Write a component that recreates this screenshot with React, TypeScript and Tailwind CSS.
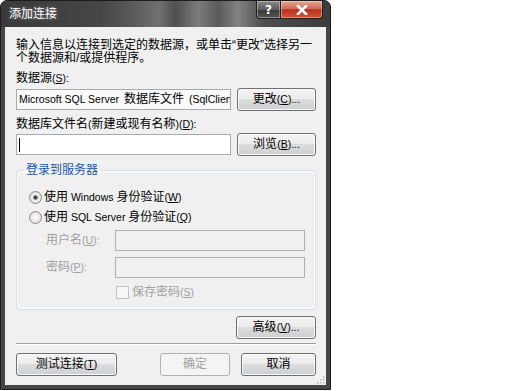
import React from "react";

const CJK = /[\u3000-\u9fff\uff00-\uffef]/;

// "&X" marks the underlined access key
function Mnemonic({ s }: { s: string }) {
  const parts = s.split(/&(.)/);
  return (
    <>
      {parts.map((p, i) =>
        i % 2 === 1 ? (
          <span key={i} className="underline underline-offset-[1px]">
            {p}
          </span>
        ) : (
          <React.Fragment key={i}>{p}</React.Fragment>
        )
      )}
    </>
  );
}

// latin runs are set smaller, like Tahoma 8pt next to 9pt CJK
function Txt({ s }: { s: string }) {
  const parts = s.split(/([\u3000-\u9fff\uff00-\uffef]+)/).filter(Boolean);
  return (
    <span>
      {parts.map((p, i) =>
        CJK.test(p) ? (
          <span key={i}>{p}</span>
        ) : (
          <span key={i} className="text-[10.5px]">
            <Mnemonic s={p} />
          </span>
        )
      )}
    </span>
  );
}

function Btn({
  label,
  className,
  disabled,
}: {
  label: string;
  className: string;
  disabled?: boolean;
}) {
  if (disabled) {
    return (
      <div
        className={`h-[23px] rounded-[3px] border border-[#adb2b5] bg-[#f4f4f4] text-[#a0a0a0] flex items-center justify-center leading-[13px] ${className}`}
      >
        <Txt s={label} />
      </div>
    );
  }
  return (
    <div
      className={`h-[23px] rounded-[3px] border border-[#707070] bg-[linear-gradient(to_bottom,#f4f4f4_0%,#ececec_45%,#dcdcdc_50%,#cdcfd1_100%)] shadow-[inset_0_0_0_1px_#fbfbfb] flex items-center justify-center leading-[13px] text-black ${className}`}
    >
      <Txt s={label} />
    </div>
  );
}

function Radio({ checked }: { checked?: boolean }) {
  return (
    <svg width="13" height="13" viewBox="0 0 13 13" className="shrink-0">
      <defs>
        <radialGradient id={checked ? "rg1" : "rg2"} cx="0.5" cy="0.5" r="0.6">
          <stop offset="0" stopColor="#ffffff" />
          <stop offset="1" stopColor="#d8d8d8" />
        </radialGradient>
      </defs>
      <circle cx="6.5" cy="6.5" r="6" fill={`url(#${checked ? "rg1" : "rg2"})`} stroke="#8a8a8a" />
      {checked && <circle cx="6.5" cy="6.5" r="2.2" fill="#4a4a4a" />}
    </svg>
  );
}

export default function App() {
  return (
    <div className="w-[512px] h-[391px] bg-white font-['Liberation_Sans','Noto_Sans_CJK_SC',sans-serif] text-[12px] text-black">
      <div className="w-[331px] h-[390px] flex flex-col border border-[#1c1c1c] rounded-t-[7px] bg-[#454545] overflow-hidden">
        {/* title bar */}
        <div className="h-[26px] shrink-0 flex items-start bg-[linear-gradient(90deg,#3a3a3a_0%,#464646_30%,#5a5a5a_40%,#707070_48%,#4f4f4f_53%,#7c7c7c_60%,#5a5a5a_66%,#828282_72%,#4c4c4c_80%,#3c3c3c_100%)]">
          <div className="pl-[8px] pt-[6px] text-white leading-[14px] [text-shadow:0_0_4px_rgba(255,255,255,0.35)]">
            添加连接
          </div>
          <div className="ml-auto mr-[7px] flex">
            <div className="w-[25px] h-[18px] border border-[#202020] border-t-0 rounded-bl-[4px] bg-[linear-gradient(to_bottom,#8a8a8a_0%,#5c5c5c_50%,#3a3a3a_52%,#555555_100%)] shadow-[inset_0_0_0_1px_rgba(255,255,255,0.35)] flex items-center justify-center text-white font-bold text-[12px] leading-none font-['DejaVu_Sans',sans-serif]">
              ?
            </div>
            <div className="w-[42px] h-[18px] border border-[#202020] border-t-0 border-l-0 rounded-br-[4px] bg-[linear-gradient(to_bottom,#e8a898_0%,#d06a55_45%,#b8301c_52%,#d0553a_100%)] shadow-[inset_0_0_0_1px_rgba(255,255,255,0.35)] flex items-center justify-center">
              <svg width="12" height="10" viewBox="0 0 12 10">
                <path d="M2 1 L10 9 M10 1 L2 9" stroke="#ffffff" strokeWidth="2.6" strokeLinecap="square" />
              </svg>
            </div>
          </div>
        </div>

        {/* client area */}
        <div className="relative flex-1 mx-[4px] mb-[4px] bg-[#f0f0f0] pl-[11px] pr-[10px] pt-[12px] flex flex-col">
          <p className="leading-[13px]">
            输入信息以连接到选定的数据源，或单击“更改”选择另一
            <br />
            个数据源和/或提供程序。
          </p>

          <div className="mt-[7px] leading-[13px]">
            <Txt s="数据源(&S):" />
          </div>
          <div className="mt-[3px] flex items-start">
            <div className="mt-[1px] w-[215px] h-[21px] border border-[#a7abb0] bg-[#f9f9f9] pl-[2px] flex items-center overflow-hidden whitespace-nowrap leading-[13px]">
              <span className="text-[10.5px]">Microsoft SQL Server</span>
              <span className="ml-[5px] shrink-0">数据库文件</span>
              <span className="ml-[5px] text-[10.5px] shrink-0">(SqlClient)</span>
            </div>
            <Btn label="更改(&C)..." className="ml-[6px] w-[79px]" />
          </div>

          <div className="mt-[7px] leading-[13px]">
            <Txt s="数据库文件名(新建或现有名称)(&D):" />
          </div>
          <div className="mt-[2px] flex items-start">
            <div className="mt-[1px] w-[215px] h-[21px] border border-[#a7abb0] bg-white flex items-center">
              <div className="ml-[2px] w-[1px] h-[14px] bg-black" />
            </div>
            <Btn label="浏览(&B)..." className="ml-[6px] w-[79px]" />
          </div>

          <fieldset className="mt-[8px] w-[300px] border border-[#d5dfe5] rounded-[3px] shadow-[inset_0_0_0_1px_#ffffff] pb-[10px]">
            <legend className="ml-[7px] px-[2px] leading-[13px] text-[#2257a8]">登录到服务器</legend>
            <div className="mt-[13px] ml-[12px] flex items-center gap-[2px] leading-[15px]">
              <Radio checked />
              <Txt s="使用 Windows 身份验证(&W)" />
            </div>
            <div className="mt-[5px] ml-[12px] flex items-center gap-[2px] leading-[15px]">
              <Radio />
              <Txt s="使用 SQL Server 身份验证(&Q)" />
            </div>
            <div className="mt-[5px] flex items-center">
              <div className="ml-[29px] w-[69px] text-[#a0a0a0] leading-[13px]">
                <Txt s="用户名(&U):" />
              </div>
              <div className="w-[190px] h-[21px] border border-[#b0b0b0] bg-[#f0f0f0]" />
            </div>
            <div className="mt-[6px] flex items-center">
              <div className="ml-[29px] w-[69px] text-[#a0a0a0] leading-[13px]">
                <Txt s="密码(&P):" />
              </div>
              <div className="w-[190px] h-[21px] border border-[#b0b0b0] bg-[#f0f0f0]" />
            </div>
            <div className="mt-[7px] ml-[99px] flex items-center gap-[3px] leading-[14px] text-[#a0a0a0]">
              <div className="w-[13px] h-[13px] border border-[#c2c2c2] bg-[#f6f6f6]" />
              <Txt s="保存密码(&S)" />
            </div>
          </fieldset>

          <div className="mt-[6px] flex justify-end">
            <Btn label="高级(&V)..." className="w-[80px]" />
          </div>

          <div className="mt-[4px] w-[300px] h-[1px] bg-[#a0a0a0] border-b border-white box-content" />

          <div className="mt-[8px] w-[300px] flex items-start">
            <Btn label="测试连接(&T)" className="w-[101px]" />
            <Btn label="确定" disabled className="ml-[43px] w-[70px]" />
            <Btn label="取消" className="ml-[11px] w-[75px]" />
          </div>

          {/* size grip */}
          <svg width="9" height="9" viewBox="0 0 9 9" className="absolute right-[1px] bottom-[1px]">
            {[
              [7, 1],
              [7, 4],
              [4, 4],
              [7, 7],
              [4, 7],
              [1, 7],
            ].map(([x, y], i) => (
              <rect key={i} x={x} y={y} width="1.5" height="1.5" fill="#b8b8b8" />
            ))}
          </svg>
        </div>
      </div>
    </div>
  );
}
